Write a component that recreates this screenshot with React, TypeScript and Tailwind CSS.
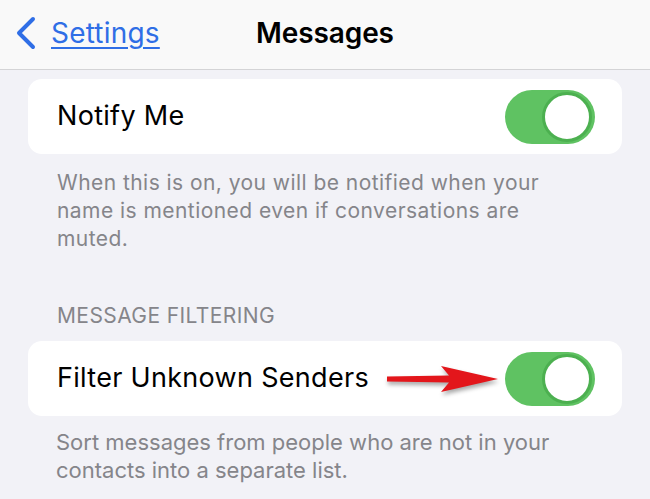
import { useState } from "react";

function Toggle({ on }: { on: boolean }) {
  return (
    <div
      className={`flex h-[54px] w-[90px] shrink-0 items-center rounded-full px-[3px] ${
        on ? "justify-end bg-[#5fc262]" : "justify-start bg-[#e9e9ea]"
      }`}
    >
      <div className="h-[50px] w-[50px] rounded-full border-[3px] border-[#4cb050] bg-white" />
    </div>
  );
}

function RedArrow() {
  return (
    <svg width="116" height="32" viewBox="0 0 116 32" className="mr-[4px] drop-shadow-[1px_3px_2px_rgba(0,0,0,0.35)]">
      <path d="M2 13.5 L64 12.5 L56 3 L113 16 L56 29 L64 19.5 L2 18.5 Z" fill="#e3161b" />
    </svg>
  );
}

export default function App() {
  const [notify] = useState(true);
  const [filter] = useState(true);

  return (
    <div className="h-[499px] w-[650px] overflow-hidden bg-[#f2f2f7] font-['Inter',sans-serif]">
      <header className="relative flex h-[70px] items-center border-b border-[#d4d4d6] bg-[#f9f9f9]">
        <div className="mt-[-3px] flex items-center pl-[16px] text-[#2f6ee6]">
          <svg width="20" height="34" viewBox="0 0 20 34" className="mr-[15px]">
            <path d="M17 3 L3 17 L17 31" fill="none" stroke="#2f6ee6" strokeWidth="4" strokeLinecap="round" strokeLinejoin="round" />
          </svg>
          <span className="text-[28px] tracking-[0.2px] underline decoration-[2px] underline-offset-[4px]">Settings</span>
        </div>
        <h1 className="absolute left-[256px] top-[12px] text-[28px] font-semibold tracking-[-0.1px] text-black">Messages</h1>
      </header>

      <div className="px-[28px] pt-[9px]">
        <div className="flex h-[75px] items-center justify-between rounded-[14px] bg-white pl-[29px] pr-[27px]">
          <span className="text-[27px] tracking-[0.3px] text-black">Notify Me</span>
          <Toggle on={notify} />
        </div>
        <p className="px-[29px] pt-[15px] text-[21px] leading-[28px] tracking-[0.45px] text-[#85858a]">
          When this is on, you will be notified when your name is mentioned even if conversations are muted.
        </p>

        <p className="px-[29px] pt-[51px] text-[21px] leading-[24px] tracking-[0.4px] text-[#85858a]">MESSAGE FILTERING</p>

        <div className="mt-[13px] flex h-[75px] items-center justify-between rounded-[14px] bg-white pl-[29px] pr-[27px]">
          <span className="text-[27px] tracking-[0.3px] text-black">Filter Unknown Senders</span>
          <div className="flex items-center">
            <RedArrow />
            <Toggle on={filter} />
          </div>
        </div>
        <p className="px-[28px] pt-[12px] text-[22px] leading-[28px] tracking-[0px] text-[#85858a]">
          Sort messages from people who are not in your contacts into a separate list.
        </p>
      </div>
    </div>
  );
}
